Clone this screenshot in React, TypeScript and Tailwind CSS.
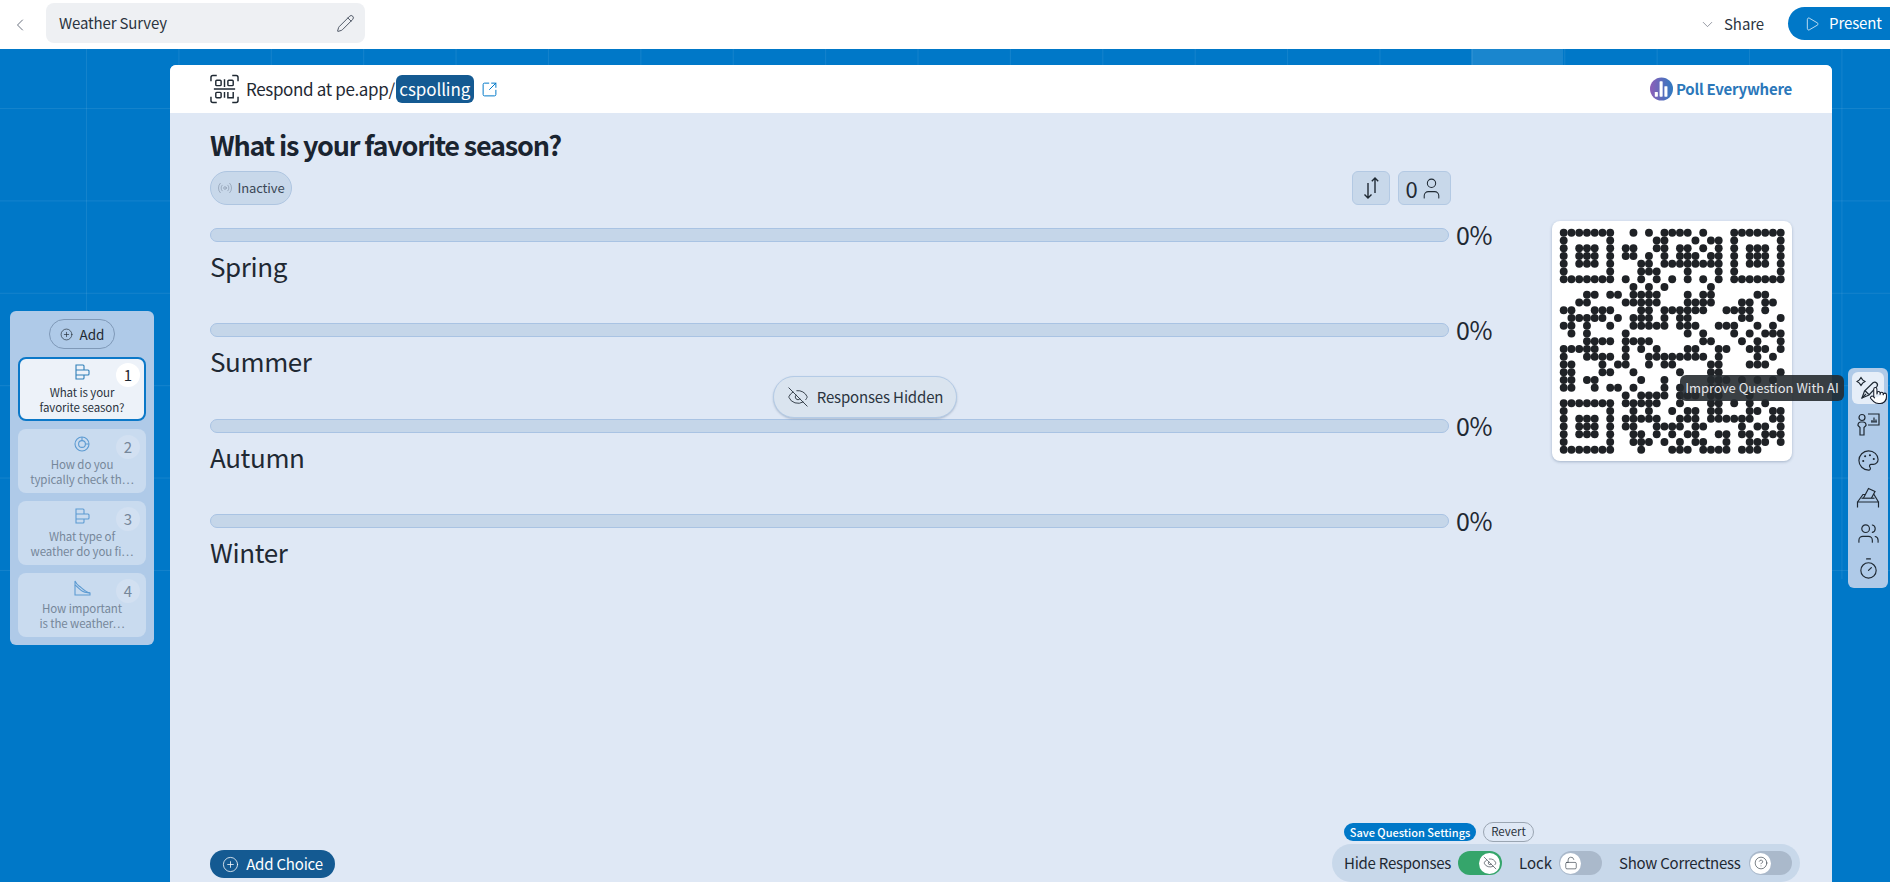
import { ChevronLeft, ChevronDown, Pencil, Play, SquareArrowOutUpRight, CirclePlus, EyeOff, LockOpen, CircleHelp, Palette, Users, Timer, Radio, User, Pointer } from "lucide-react";

const QR: (number | [number, number])[][] = [
  [[0, 6], 9, 11, [13, 16], 18, [22, 28]],
  [0, 6, 12, 13, 17, 19, 20, 22, 28],
  [0, [2, 4], 6, 8, 9, 12, 13, 15, 16, 18, 20, 22, [24, 26], 28],
  [0, [2, 4], 6, 8, 9, 11, 13, 15, 16, 17, 19, 20, 22, [24, 26], 28],
  [0, [2, 4], 6, 10, 11, [13, 20], 22, [24, 26], 28],
  [0, 6, 10, 11, 12, 16, 20, 22, 28],
  [[0, 6], 8, 10, 12, 14, 16, 18, 20, [22, 28]],
  [9, 11, 13, 19],
  [3, 4, 6, 7, [9, 12], 16, 18, 19, 25, 26],
  [2, 3, [8, 12], [16, 19], 23, 24, 26, 27],
  [0, 1, [4, 6], 10, 11, [13, 18], [21, 24], 26],
  [[1, 5], 7, [9, 11], 13, 15, 16, 23, 24, 28],
  [0, 1, 3, 6, [9, 13], [15, 17], [20, 22], 25, 27],
  [1, 3, 8, 16, 18, 22, 24, 26, 27, 28],
  [[3, 6], [8, 11], 18, 19, 23, 25, 28],
  [[0, 4], 8, 10, 12, 16, 17, 20, 21, [24, 26], 28],
  [0, [3, 6], 8, [11, 18], 20, 25, 27],
  [0, 1, 5, 7, 8, 11, 13, 14, 19, 20, [24, 26]],
  [0, 1, 5, 6, 9, 15, 19, 20, 28],
  [0, 1, 3, 4, 10, 13, 19, 20, 21, 23, 25, 27],
  [0, 1, 4, 6, 7, 9, 13, 15, 19, 20],
  [8, [10, 13], 15, 16, 17, 19, 20, 24],
  [[0, 6], [8, 12], 15, 19, 20, 22, 24, 26],
  [0, 6, 9, 11, 14, 16, 17, 19, 20, 24, 25, 27, 28],
  [0, [2, 4], 6, [8, 12], [15, 17], [19, 24], 27, 28],
  [0, [2, 4], 6, 8, 9, [12, 15], 17, 18, 23, 25, 26, 28],
  [0, [2, 4], 6, 9, 10, 12, 14, 16, 17, 20, 21, 23, 24, [26, 28]],
  [0, 6, 9, 10, 11, 13, 15, 17, 18, 21, [24, 26], 28],
  [[0, 6], 10, [14, 16], [18, 21], [23, 25]],
];

function QrDots() {
  const dots: [number, number][] = [];
  QR.forEach((row, r) =>
    row.forEach((item) => {
      if (Array.isArray(item)) {
        for (let c = item[0]; c <= item[1]; c++) dots.push([c, r]);
      } else dots.push([item, r]);
    })
  );
  return (
    <svg width="240" height="240" viewBox="0 0 240 240">
      {dots.map(([c, r]) => (
        <circle key={`${c}-${r}`} cx={11.7 + c * 7.75} cy={11.7 + r * 7.75} r="3.95" fill="#1f2226" />
      ))}
    </svg>
  );
}

function QrIcon() {
  return (
    <svg width="29" height="30" viewBox="0 0 30 30" fill="none" stroke="#1f2933" strokeWidth="1.5">
      <path d="M1 7V3a2 2 0 0 1 2-2h4M23 1h4a2 2 0 0 1 2 2v4M29 23v4a2 2 0 0 1-2 2h-4M7 29H3a2 2 0 0 1-2-2v-4" />
      <rect x="6" y="6" width="5.5" height="5.5" rx="1" />
      <rect x="18.5" y="6" width="5.5" height="5.5" rx="1" />
      <rect x="6" y="18.5" width="5.5" height="5.5" rx="1" />
      <path d="M15 5v8M4 15h11M15 15h11M18.5 18v6h5.5v-6M15 18v6" />
    </svg>
  );
}

function Logo() {
  return (
    <svg width="23" height="24" viewBox="0 0 24 24">
      <defs>
        <linearGradient id="pe" x1="0" y1="0" x2="1" y2="0">
          <stop offset="0" stopColor="#8d5fb8" />
          <stop offset="1" stopColor="#2f79c0" />
        </linearGradient>
      </defs>
      <circle cx="12" cy="12" r="12" fill="url(#pe)" />
      <rect x="5" y="15" width="3.2" height="5" rx="0.6" fill="#fff" />
      <rect x="10" y="4" width="3.2" height="16" rx="0.6" fill="#fff" />
      <rect x="15" y="9" width="3.2" height="11" rx="0.6" fill="#fff" />
    </svg>
  );
}

function BarsIcon({ dim }: { dim?: boolean }) {
  return (
    <svg width="16" height="16" viewBox="0 0 16 16" fill="none" stroke={dim ? "#5d9bd2" : "#2f7fb8"} strokeWidth="1.1">
      <path d="M2 1h7a1 1 0 0 1 1 1v4H2zM2 6h12a1 1 0 0 1 1 1v3a1 1 0 0 1-1 1H2zM2 11h8v3a1 1 0 0 1-1 1H2z" />
    </svg>
  );
}

function DonutIcon() {
  return (
    <svg width="16" height="16" viewBox="0 0 16 16" fill="none" stroke="#5d9bd2" strokeWidth="1.1">
      <circle cx="8" cy="8" r="7" />
      <circle cx="8" cy="8" r="3.4" />
      <path d="M8 1v3.6M11.4 8H15" />
    </svg>
  );
}

function AreaIcon() {
  return (
    <svg width="17" height="16" viewBox="0 0 17 16" fill="none" stroke="#5d9bd2" strokeWidth="1.1">
      <path d="M1 1v14h15v-2C11 12 8 8 5 6 3.5 5 2 3 1 1z" />
      <path d="M1 5c3 2 5 5 8 6.5 2 1 5 1 7 1.5" />
    </svg>
  );
}

function WandIcon() {
  return (
    <svg width="24" height="24" viewBox="0 0 24 24" fill="none" stroke="#1f2933" strokeWidth="1.2">
      <path d="M5 1.5l1.6 2.4L9 5.5 6.6 7.1 5 9.5 3.4 7.1 1 5.5l2.4-1.6z" />
      <path d="M6 22l2.5-7L17 6.8a2.7 2.7 0 0 1 3.8 3.8L13 19z" />
      <path d="M8.8 14.5l4 4M6 22l4-4" />
    </svg>
  );
}

function PresenterIcon() {
  return (
    <svg width="24" height="24" viewBox="0 0 24 24" fill="none" stroke="#1f2933" strokeWidth="1.2">
      <circle cx="6" cy="5.5" r="3" />
      <path d="M4 23v-7.5L2 13.5v-1A3 3 0 0 1 5 10h2a3 3 0 0 1 3 2.5v1l-2 2V23z" />
      <path d="M12 2h11v11H12" />
      <path d="M15 10h6M16 10V8M18 10V5.5M20 10V7.5" />
    </svg>
  );
}

function BallotIcon() {
  return (
    <svg width="24" height="24" viewBox="0 0 24 24" fill="none" stroke="#1f2933" strokeWidth="1.2">
      <path d="M1.5 22.5V17h21v5.5M1.5 17L7 9.5h2M22.5 17L18 9.5h-1" />
      <path d="M7.5 13l5-9.5 6.5 3-3.5 6.5" />
      <path d="M5.5 13.2h13" />
    </svg>
  );
}

function SortIcon() {
  return (
    <svg width="18" height="24" viewBox="0 0 18 24" fill="none" stroke="#1f2933" strokeWidth="1.4">
      <path d="M6 7v15M2.5 18.5L6 22l3.5-3.5" />
      <path d="M13 2v15M9.8 5.2L13 2l3.2 3.2" />
    </svg>
  );
}

const thumbs = [
  { n: 1, l1: "What is your", l2: "favorite season?", icon: <BarsIcon />, active: true },
  { n: 2, l1: "How do you", l2: "typically check th…", icon: <DonutIcon /> },
  { n: 3, l1: "What type of", l2: "weather do you fi…", icon: <BarsIcon dim /> },
  { n: 4, l1: "How important", l2: "is the weather…", icon: <AreaIcon /> },
];

const choices = ["Spring", "Summer", "Autumn", "Winter"];

export default function App() {
  return (
    <div className="w-[1890px] h-[882px] overflow-hidden flex flex-col bg-white font-['Noto_Sans_CJK_SC','Noto_Sans',sans-serif] text-[#1f2933]">
      {/* Top bar */}
      <header className="h-[49px] shrink-0 flex items-center bg-white">
        <div className="w-[46px] pl-[10px]">
          <ChevronLeft size={20} strokeWidth={1.2} className="text-[#6b7280]" />
        </div>
        <div className="w-[319px] h-[40px] -mt-[3px] rounded-lg bg-[#eef0f3] flex items-center justify-between pl-[13px] pr-[10px]">
          <span className="text-[15px] tracking-[-0.15px] text-[#2b3440]">Weather Survey</span>
          <Pencil size={19} strokeWidth={1.1} className="text-[#374151]" />
        </div>
        <div className="ml-auto flex items-center">
          <ChevronDown size={17} strokeWidth={1} className="text-[#6b7280] mr-[8px]" />
          <span className="text-[15px] tracking-[-0.1px] text-[#2b3440]">Share</span>
          <button className="ml-[24px] w-[102px] h-[33px] -mt-[2px] rounded-l-full bg-[#0078c8] text-white flex items-center pl-[16px] gap-[9px] text-[15px] tracking-[-0.1px]">
            <Play size={16} strokeWidth={1.1} />
            Present
          </button>
        </div>
      </header>

      {/* Canvas */}
      <main className="relative flex-1 flex min-h-0 bg-[#0078c8]">
        <div className="absolute inset-x-0 top-0 h-[530px] bg-[linear-gradient(rgba(255,255,255,0.08)_1px,transparent_1px),linear-gradient(90deg,rgba(255,255,255,0.08)_1px,transparent_1px)] bg-[size:92.4px_92.4px] bg-[position:86px_59px]" />
        <div className="absolute left-[1471px] top-0 w-[92px] h-[16px] bg-white/10" />

        {/* Slides panel */}
        <aside className="relative w-[170px] shrink-0 pl-[10px] pt-[262px]">
          <div className="w-[144px] h-[334px] rounded-md bg-[#afcae8] px-[8px] pt-[8px] flex flex-col items-center">
            <button className="w-[66px] h-[30px] rounded-full border border-[#7f99b8] flex items-center justify-center gap-[7px] text-[13.5px] text-[#1f2933]">
              <CirclePlus size={13} strokeWidth={1.2} />
              Add
            </button>
            <div className="mt-[8px] w-full flex flex-col gap-[8px]">
              {thumbs.map((t) => (
                <div
                  key={t.n}
                  className={
                    t.active
                      ? "relative h-[64px] rounded-lg border-2 border-[#0b78c8] bg-[#edf2f9] flex flex-col items-center pt-[5px] text-[#2b3440]"
                      : "relative h-[64px] rounded-lg bg-[#c9dbef] flex flex-col items-center pt-[7px] text-[#76879a]"
                  }
                >
                  {t.icon}
                  <span className="text-[11.5px] tracking-[-0.1px] leading-[15px] mt-[5px] whitespace-nowrap">{t.l1}</span>
                  <span className="text-[11.5px] tracking-[-0.1px] leading-[15px] whitespace-nowrap">{t.l2}</span>
                  <span
                    className={
                      t.active
                        ? "absolute right-[4px] top-[4px] w-[24px] h-[24px] rounded-full bg-white flex items-center justify-center text-[15px] text-[#1f2933]"
                        : "absolute right-[6px] top-[6px] w-[24px] h-[24px] rounded-full bg-[#d2e0f1] flex items-center justify-center text-[15px] text-[#76879a]"
                    }
                  >
                    {t.n}
                  </span>
                </div>
              ))}
            </div>
          </div>
        </aside>

        {/* Card */}
        <section className="relative w-[1662px] shrink-0 mt-[16px] flex flex-col rounded-t-md overflow-hidden bg-[#dfe8f5]">
          <div className="h-[48px] shrink-0 bg-white flex items-center pl-[40px] pr-[40px]">
            <QrIcon />
            <span className="ml-[7px] text-[17px] tracking-[-0.35px] text-[#1f2933]">Respond at pe.app/</span>
            <span className="ml-[1px] h-[28px] w-[78px] rounded-md bg-[#145a92] text-white text-[17px] tracking-[-0.1px] flex items-center justify-center">cspolling</span>
            <SquareArrowOutUpRight size={17} strokeWidth={1.4} className="ml-[7px] text-[#0078c8]" />
            <div className="ml-auto flex items-center gap-[3px]">
              <Logo />
              <span className="text-[15px] font-bold tracking-[-0.25px] text-[#2b77ba]">Poll Everywhere</span>
            </div>
          </div>

          <div className="flex-1 min-h-0 flex flex-col justify-between px-[40px]">
            <div className="flex justify-between">
              <div className="w-[1282px]">
                <h1 className="mt-[13px] h-[38px] leading-[38px] text-[27px] font-semibold tracking-[-1.2px] text-[#1a2430]">What is your favorite season?</h1>
                <div className="mt-[7px] w-[1241px] flex items-center justify-between">
                  <div className="h-[34px] w-[82px] rounded-full bg-[#c8d8ea] border border-[#aec5e0] flex items-center justify-center gap-[4px] text-[13px] tracking-[-0.1px] text-[#3a4756]">
                    <Radio size={16} strokeWidth={0.9} className="text-[#7f8fa2]" />
                    Inactive
                  </div>
                  <div className="flex gap-[8px]">
                    <div className="w-[38px] h-[34px] rounded-md bg-[#c8d8ea] border border-[#b3c9e3] flex items-center justify-center">
                      <SortIcon />
                    </div>
                    <div className="w-[53px] h-[34px] rounded-md bg-[#c8d8ea] border border-[#b3c9e3] flex items-center justify-center gap-[1px] text-[22px]">
                      0
                      <User size={25} strokeWidth={1} />
                    </div>
                  </div>
                </div>
                <div className="mt-[23px] flex flex-col gap-[38.4px]">
                  {choices.map((c) => (
                    <div key={c}>
                      <div className="flex items-center gap-[7px] h-[14px]">
                        <div className="w-[1239px] shrink-0 h-[14px] rounded-full bg-[#c5d6e9] border border-[#a9c3e3]" />
                        <span className="text-[25px] tracking-[-0.3px] leading-[14px] -mt-[2px] text-[#1f2933]">0%</span>
                      </div>
                      <div className="mt-[7px] mb-[2px] h-[34px] leading-[34px] text-[26px] tracking-[-0.4px] text-[#1f2933]">{c}</div>
                    </div>
                  ))}
                </div>
              </div>
              <div className="mt-[108px] w-[240px] h-[240px] rounded-lg bg-white shadow-[0_1px_3px_rgba(30,60,100,0.3)] shrink-0">
                <QrDots />
              </div>
            </div>

            <div className="flex items-end justify-between">
              <button className="mb-[4px] w-[125px] h-[28px] rounded-full bg-[#145a92] text-white text-[15px] tracking-[-0.2px] flex items-center justify-center gap-[7px]">
                <CirclePlus size={17} strokeWidth={1.1} />
                Add Choice
              </button>
              <div className="-mr-[8px] flex flex-col">
                <div className="pl-[12px] flex items-center gap-[7px] mb-[2px]">
                  <button className="w-[132px] h-[18px] rounded-full bg-[#0078c8] text-white text-[11px] font-medium flex items-center justify-center whitespace-nowrap">Save Question Settings</button>
                  <button className="w-[51px] h-[20px] rounded-full border border-[#9aa5b2] text-[11.5px] text-[#2b3440] flex items-center justify-center">Revert</button>
                </div>
                <div className="w-[468px] h-[38px] rounded-full bg-[#c8d8ea] flex items-center pl-[12px] text-[15px] text-[#1f2933] whitespace-nowrap">
                  <span className="w-[106px] tracking-[-0.25px]">Hide Responses</span>
                  <div className="ml-[8px] w-[44px] h-[24px] rounded-full bg-[#35a56b] flex items-center justify-end pr-[2px]">
                    <span className="w-[21px] h-[21px] rounded-full bg-white flex items-center justify-center">
                      <EyeOff size={14} strokeWidth={1} />
                    </span>
                  </div>
                  <span className="ml-[17px] w-[32px]">Lock</span>
                  <div className="ml-[8px] w-[43px] h-[24px] rounded-full bg-[#aab9cb] flex items-center pl-[1px]">
                    <span className="w-[21px] h-[21px] rounded-full bg-white flex items-center justify-center">
                      <LockOpen size={14} strokeWidth={1} />
                    </span>
                  </div>
                  <span className="ml-[17px] w-[121px] tracking-[-0.25px]">Show Correctness</span>
                  <div className="ml-[9px] w-[43px] h-[24px] rounded-full bg-[#aab9cb] flex items-center pl-[1px]">
                    <span className="w-[21px] h-[21px] rounded-full bg-white flex items-center justify-center">
                      <CircleHelp size={14} strokeWidth={1} />
                    </span>
                  </div>
                </div>
              </div>
            </div>
          </div>

          {/* Floating pill */}
          <div className="absolute left-[603px] top-[311px] w-[184px] h-[42px] rounded-full bg-[#dae4ef] border border-[#b4cbe6] shadow-[0_1px_2px_rgba(30,60,100,0.25)] flex items-center justify-center gap-[8px] text-[15px] tracking-[-0.15px] text-[#2b3440]">
            <EyeOff size={22} strokeWidth={1} />
            Responses Hidden
          </div>
        </section>

        {/* Tools */}
        <aside className="relative pl-[16px] pt-[319px]">
          <div className="relative w-[40px] h-[220px] rounded-md bg-[#afcae8] pt-[4px] flex flex-col items-center">
            <div className="w-[32px] h-[32px] rounded-md bg-[#e6eef8] flex items-center justify-center">
              <WandIcon />
            </div>
            <div className="mt-[4px] w-[32px] h-[32px] flex items-center justify-center"><PresenterIcon /></div>
            <div className="mt-[4px] w-[32px] h-[32px] flex items-center justify-center"><Palette size={23} strokeWidth={1.2} /></div>
            <div className="mt-[5px] w-[32px] h-[32px] flex items-center justify-center"><BallotIcon /></div>
            <div className="mt-[4px] w-[32px] h-[32px] flex items-center justify-center"><Users size={23} strokeWidth={1.2} /></div>
            <div className="mt-[3px] w-[32px] h-[32px] flex items-center justify-center"><Timer size={23} strokeWidth={1.2} /></div>

            <Pointer size={19} strokeWidth={1.3} className="absolute left-[21px] top-[18px] text-[#111827] fill-white" />

            <div className="absolute right-[44px] top-[7px] w-[164px] h-[26px] rounded-md bg-[#262b30]/90 text-[#e5e7eb] text-[13px] flex items-center justify-center whitespace-nowrap">
              Improve Question With AI
            </div>
          </div>
        </aside>
      </main>
    </div>
  );
}
